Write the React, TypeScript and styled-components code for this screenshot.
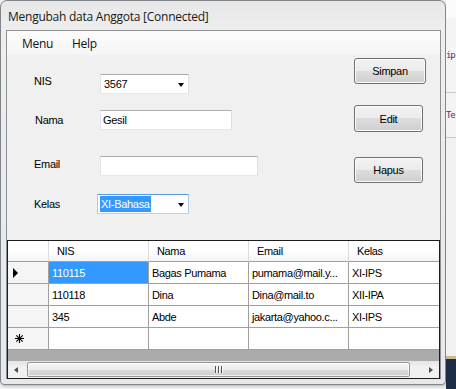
import React from 'react';
import styled, { createGlobalStyle } from 'styled-components';

const GlobalStyle = createGlobalStyle`
  html, body {
    margin: 0;
    padding: 0;
  }
  body {
    width: 456px;
    height: 389px;
    overflow: hidden;
    background: #eef0f2;
    font-family: "Liberation Sans", Arial, sans-serif;
  }
`;

const uiFont = `"Segoe UI", "Open Sans", "Noto Sans", sans-serif`;
const formFont = `"Liberation Sans", Arial, sans-serif`;

const Desktop = styled.div`
  display: flex;
  width: 456px;
  height: 389px;
  overflow: hidden;
`;

const Window = styled.div`
  flex: none;
  width: 446px;
  height: 385px;
  box-sizing: border-box;
  display: flex;
  flex-direction: column;
  padding: 0 4px 5px 5px;
  border: 1px solid #80858b;
  border-radius: 7px 7px 4px 4px;
  background: linear-gradient(180deg, #e7e7e7 0px, #eeeeee 29px, #e6e8eb 100%);
  box-shadow: 1px 1px 3px rgba(0, 0, 0, 0.25);
`;

const TitleBar = styled.div`
  height: 29px;
  flex: none;
  display: flex;
  align-items: center;
  padding: 2px 0 0 2px;
  box-sizing: border-box;
  font-family: ${uiFont};
  font-size: 12px;
  letter-spacing: -0.25px;
  color: #1a1a1a;
`;

const Client = styled.div`
  flex: 1;
  display: flex;
  flex-direction: column;
  border: 1px solid #8d8f91;
  border-bottom: none;
  background: #f0f0f0;
`;

const MenuBar = styled.div`
  height: 24px;
  flex: none;
  display: flex;
  align-items: center;
  padding-left: 15px;
  background: linear-gradient(180deg, #fbfbfb 0%, #f6f6f6 100%);
  font-family: ${uiFont};
  font-size: 12px;
  letter-spacing: -0.3px;
  color: #111;
`;

const MenuItem = styled.span<{ $w: number }>`
  width: ${p => p.$w}px;
  padding-top: 1px;
`;

const FormArea = styled.div`
  height: 185px;
  flex: none;
  display: flex;
  padding-left: 27px;
  box-sizing: border-box;
  font-family: ${formFont};
  font-size: 11px;
  letter-spacing: -0.3px;
  color: #000;
`;

const Fields = styled.div`
  flex: 1;
  display: flex;
  flex-direction: column;
  padding-top: 19px;
`;

const FieldRow = styled.div<{ $mt: number }>`
  display: flex;
  align-items: center;
  height: 20px;
  margin-top: ${p => p.$mt}px;
`;

const Label = styled.span<{ $dx?: number; $up?: number }>`
  width: ${p => 66 - (p.$dx || 0)}px;
  margin-left: ${p => p.$dx || 0}px;
  margin-bottom: ${p => (p.$up || 0) * 2}px;
`;

const TextBox = styled.div<{ $w: number }>`
  width: ${p => p.$w}px;
  height: 20px;
  box-sizing: border-box;
  display: flex;
  align-items: center;
  padding-left: 2px;
  background: #fff;
  border: 1px solid;
  border-color: #abadb3 #dbdfe6 #e3e9ef #e2e3ea;
`;

const ComboBox = styled.div<{ $w: number; $dx?: number; $focused?: boolean }>`
  width: ${p => p.$w}px;
  height: 20px;
  margin-left: ${p => p.$dx || 0}px;
  box-sizing: border-box;
  display: flex;
  align-items: center;
  justify-content: space-between;
  padding: 0 4px 0 2px;
  background: #fff;
  border: 1px solid;
  border-color: ${p =>
    p.$focused ? '#5a9ad6 #a9cbea #b7d6f0 #a9cbea' : '#abadb3 #dbdfe6 #e3e9ef #e2e3ea'};
`;

const ComboText = styled.span<{ $selected?: boolean }>`
  padding: 1px 1px;
  line-height: 14px;
  background: ${p => (p.$selected ? '#3399ff' : 'transparent')};
  color: ${p => (p.$selected ? '#fff' : '#000')};
`;

const DropArrow = styled.span`
  width: 0;
  height: 0;
  border-left: 3.5px solid transparent;
  border-right: 3.5px solid transparent;
  border-top: 4px solid #000;
  margin-top: 1px;
`;

const Buttons = styled.div`
  flex: none;
  width: 86px;
  display: flex;
  flex-direction: column;
  align-items: flex-start;
  padding-top: 3px;
`;

const Button = styled.button<{ $w: number; $h: number; $mt: number }>`
  width: ${p => p.$w}px;
  height: ${p => p.$h}px;
  margin-top: ${p => p.$mt}px;
  padding: 0;
  border: 1px solid #707070;
  border-radius: 3px;
  background: linear-gradient(180deg, #f2f2f2 0%, #ebebeb 50%, #dddddd 50%, #cfcfcf 100%);
  box-shadow: inset 0 0 0 1px #fcfcfc;
  font-family: ${formFont};
  font-size: 11px;
  letter-spacing: -0.3px;
  color: #000;
`;

const Grid = styled.div`
  height: 139px;
  flex: none;
  box-sizing: border-box;
  display: flex;
  flex-direction: column;
  border: 1px solid #1c1c1c;
  background: #ababab;
  overflow: hidden;
  font-family: ${formFont};
  font-size: 11px;
  letter-spacing: -0.35px;
  color: #000;
`;

const GridRow = styled.div<{ $h: number }>`
  display: flex;
  flex: none;
  height: ${p => p.$h}px;
  overflow: hidden;
`;

type CellKind = 'corner' | 'head' | 'rowhead' | 'cell' | 'selected';

const Cell = styled.div<{ $w: number; $kind: CellKind }>`
  flex: none;
  width: ${p => p.$w}px;
  box-sizing: border-box;
  display: flex;
  align-items: center;
  white-space: nowrap;
  overflow: hidden;
  border-right: 1px solid
    ${p => (p.$kind === 'head' || p.$kind === 'corner' ? '#dadcdf' : '#a0a0a0')};
  border-bottom: 1px solid #a0a0a0;
  padding-left: ${p => (p.$kind === 'head' ? 8 : p.$kind === 'rowhead' ? 0 : 3)}px;
  background: ${p =>
    p.$kind === 'head' || p.$kind === 'corner'
      ? 'linear-gradient(180deg, #ffffff 0%, #ffffff 45%, #f3f4f6 100%)'
      : p.$kind === 'rowhead'
        ? '#f5f5f5'
        : p.$kind === 'selected'
          ? '#3399ff'
          : '#ffffff'};
  color: ${p => (p.$kind === 'selected' ? '#fff' : '#000')};
`;

const RowGlyph = styled.svg<{ $ml: number }>`
  margin-left: ${p => p.$ml}px;
`;

const Filler = styled.div`
  flex: 1;
`;

const HScroll = styled.div`
  flex: none;
  height: 17px;
  display: flex;
  background: linear-gradient(180deg, #e4e4e4 0%, #f1f1f1 35%, #f0f0f0 100%);
`;

const ScrollButton = styled.div<{ $dir: 'left' | 'right' }>`
  width: 17px;
  flex: none;
  display: flex;
  align-items: center;
  justify-content: center;
  &::before {
    content: '';
    width: 0;
    height: 0;
    border-top: 3.5px solid transparent;
    border-bottom: 3.5px solid transparent;
    ${p =>
      p.$dir === 'left'
        ? 'border-right: 4px solid #4a4a4a; margin-left: -1px;'
        : 'border-left: 4px solid #4a4a4a; margin-left: 1px;'}
  }
`;

const Track = styled.div`
  flex: 1;
  display: flex;
  align-items: center;
  padding-left: 2px;
`;

const Thumb = styled.div`
  width: 383px;
  height: 15px;
  box-sizing: border-box;
  display: flex;
  align-items: center;
  justify-content: center;
  gap: 2px;
  border: 1px solid #969696;
  border-radius: 2px;
  background: linear-gradient(180deg, #f5f5f5 0%, #ebebeb 50%, #dbdbdb 50%, #cfcfcf 100%);
  box-shadow: inset 0 0 0 1px rgba(255, 255, 255, 0.7);
`;

const Grip = styled.span`
  width: 1px;
  height: 7px;
  background: #555;
  box-shadow: 1px 0 0 #fafafa;
`;

const Backdrop = styled.div`
  flex: 1;
  min-width: 0;
  display: flex;
  flex-direction: column;
  background: #f7f7f7;
  font-family: "DejaVu Sans Mono", "Liberation Mono", monospace;
  font-size: 9px;
  letter-spacing: -1.2px;
  color: #5a2d6e;
`;

const BackdropBand = styled.div<{ $h: number; $bg: string; $line?: boolean }>`
  height: ${p => p.$h}px;
  flex: none;
  background: ${p => p.$bg};
  border-bottom: ${p => (p.$line ? '1px solid #c8c8c8' : 'none')};
  display: flex;
  align-items: center;
  white-space: nowrap;
`;

const columns = [
  { title: 'NIS', w: 100 },
  { title: 'Nama', w: 100 },
  { title: 'Email', w: 100 },
  { title: 'Kelas', w: 100 },
];

const rows = [
  ['110115', 'Bagas Pumama', 'pumama@mail.y...', 'XI-IPS'],
  ['110118', 'Dina', 'Dina@mail.to', 'XII-IPA'],
  ['345', 'Abde', 'jakarta@yahoo.c...', 'XI-IPS'],
];

const CurrentArrow = () => (
  <RowGlyph $ml={5} width="6" height="10" viewBox="0 0 6 10">
    <polygon points="0,0 5,5 0,10" fill="#000" />
  </RowGlyph>
);

const NewRowStar = () => (
  <RowGlyph $ml={7} width="9" height="9" viewBox="0 0 9 9">
    <g stroke="#000" strokeWidth="1.1">
      <line x1="4.5" y1="0" x2="4.5" y2="9" />
      <line x1="0" y1="4.5" x2="9" y2="4.5" />
      <line x1="1.3" y1="1.3" x2="7.7" y2="7.7" />
      <line x1="7.7" y1="1.3" x2="1.3" y2="7.7" />
    </g>
  </RowGlyph>
);

const App: React.FC = () => {
  return (
    <>
      <GlobalStyle />
      <Desktop>
        <Window>
          <TitleBar>Mengubah data Anggota [Connected]</TitleBar>
          <Client>
            <MenuBar>
              <MenuItem $w={50}>Menu</MenuItem>
              <MenuItem $w={40}>Help</MenuItem>
            </MenuBar>

            <FormArea>
              <Fields>
                <FieldRow $mt={0}>
                  <Label $up={3}>NIS</Label>
                  <ComboBox $w={89}>
                    <ComboText>3567</ComboText>
                    <DropArrow />
                  </ComboBox>
                </FieldRow>
                <FieldRow $mt={16}>
                  <Label $dx={1}>Nama</Label>
                  <TextBox $w={132}>Gesil</TextBox>
                </FieldRow>
                <FieldRow $mt={26}>
                  <Label $up={2}>Email</Label>
                  <TextBox $w={158} />
                </FieldRow>
                <FieldRow $mt={18}>
                  <Label>Kelas</Label>
                  <ComboBox $w={92} $dx={-3} $focused>
                    <ComboText $selected>XI-Bahasa</ComboText>
                    <DropArrow />
                  </ComboBox>
                </FieldRow>
              </Fields>

              <Buttons>
                <Button $w={72} $h={26} $mt={0}>Simpan</Button>
                <Button $w={69} $h={27} $mt={21}>Edit</Button>
                <Button $w={69} $h={26} $mt={25}>Hapus</Button>
              </Buttons>
            </FormArea>

            <Grid>
              <GridRow $h={21}>
                <Cell $w={41} $kind="corner" />
                {columns.map(c => (
                  <Cell key={c.title} $w={c.w} $kind="head">
                    {c.title}
                  </Cell>
                ))}
              </GridRow>
              {rows.map((r, i) => (
                <GridRow key={i} $h={22}>
                  <Cell $w={41} $kind="rowhead">
                    {i === 0 && <CurrentArrow />}
                  </Cell>
                  {r.map((v, j) => (
                    <Cell key={j} $w={columns[j].w} $kind={i === 0 && j === 0 ? 'selected' : 'cell'}>
                      {v}
                    </Cell>
                  ))}
                </GridRow>
              ))}
              <GridRow $h={22}>
                <Cell $w={41} $kind="rowhead">
                  <NewRowStar />
                </Cell>
                {columns.map(c => (
                  <Cell key={c.title} $w={c.w} $kind="cell" />
                ))}
              </GridRow>
              <Filler />
              <HScroll>
                <ScrollButton $dir="left" />
                <Track>
                  <Thumb>
                    <Grip />
                    <Grip />
                    <Grip />
                  </Thumb>
                </Track>
                <ScrollButton $dir="right" />
              </HScroll>
            </Grid>
          </Client>
        </Window>

        <Backdrop>
          <BackdropBand $h={18} $bg="#fbfbfb" />
          <BackdropBand $h={74} $bg="#f4f4f4" $line>ip</BackdropBand>
          <BackdropBand $h={44} $bg="#f4f4f4" $line>Te</BackdropBand>
          <BackdropBand $h={218} $bg="#f2f2f2" />
          <BackdropBand $h={3} $bg="#c9b98f" />
          <BackdropBand $h={32} $bg="#1f2c45" />
        </Backdrop>
      </Desktop>
    </>
  );
};

export default App;
